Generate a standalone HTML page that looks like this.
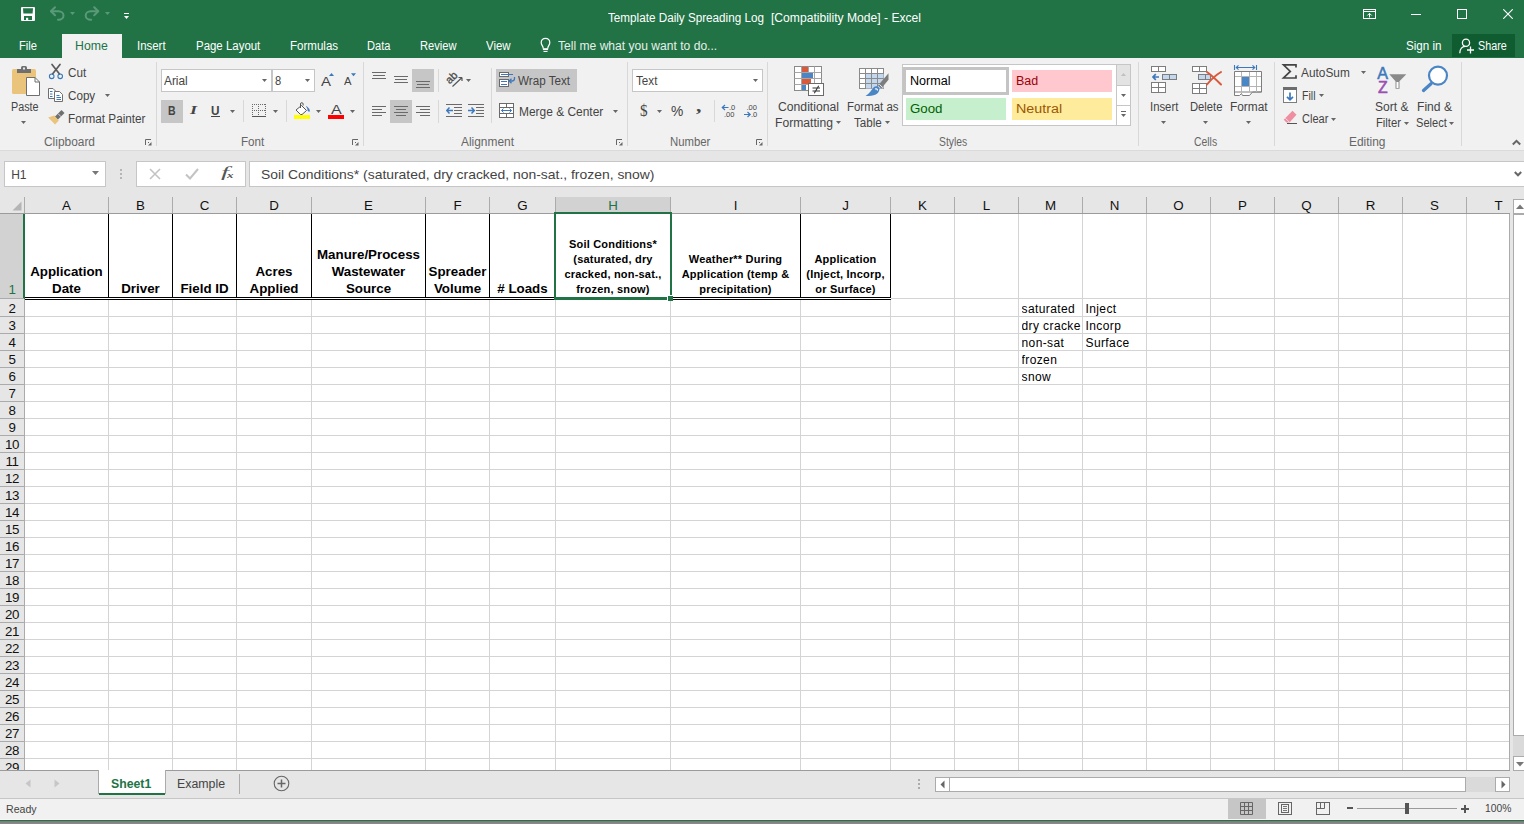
<!DOCTYPE html><html><head><meta charset="utf-8"><title>Excel</title><style>
html,body{margin:0;padding:0;}body{width:1524px;height:824px;overflow:hidden;position:relative;background:#fff;font-family:"Liberation Sans", sans-serif;}
.a{position:absolute;display:block;}
.t{position:absolute;white-space:pre;transform-origin:0 0;display:block;}
</style></head><body>
<div class="a" style="left:0px;top:0px;width:1524px;height:58px;background:#217346;"></div>
<div class="a" style="left:62px;top:34px;width:60px;height:24px;background:#f1f1f1;"></div>
<div class="a" style="left:1452px;top:34px;width:63px;height:23px;background:#0f5c31;"></div>
<svg class="a" style="left:20px;top:6px" width="16" height="16" viewBox="20 6 16 16"><rect x="21" y="7" width="14" height="14" rx="1" fill="#fff"/><path d="M23 8.300h10l-.4 5.200h-9.200z" fill="#217346"/><rect x="24" y="16" width="8" height="4" fill="#217346"/><rect x="26" y="17.800" width="2.200" height="2.200" fill="#fff"/></svg>
<svg class="a" style="left:48px;top:5px" width="18" height="17" viewBox="48 5 18 17"><path d="M51 11.200H58.500a5 4.300 0 0 1 0 8.600H58" fill="none" stroke="#5a9a79" stroke-width="2" stroke-linecap="round"/><path d="M55 7.200L51 11.200L55 15.200" fill="none" stroke="#5a9a79" stroke-width="2" stroke-linecap="round" stroke-linejoin="round"/></svg>
<svg class="a" style="left:70.2px;top:12.0px" width="5" height="3" viewBox="0 0 5 3"><path d="M0 0H5L2.5 3Z" fill="#5a9a79"/></svg>
<svg class="a" style="left:83px;top:5px" width="18" height="17" viewBox="83 5 18 17"><path d="M98.200 11.200H90.700a5 4.300 0 0 0 0 8.600H91.200" fill="none" stroke="#5a9a79" stroke-width="2" stroke-linecap="round"/><path d="M94.200 7.200L98.200 11.200L94.200 15.200" fill="none" stroke="#5a9a79" stroke-width="2" stroke-linecap="round" stroke-linejoin="round"/></svg>
<svg class="a" style="left:105.0px;top:12.0px" width="5" height="3" viewBox="0 0 5 3"><path d="M0 0H5L2.5 3Z" fill="#5a9a79"/></svg>
<div class="a" style="left:124px;top:13px;width:5px;height:1px;background:#ffffff;"></div>
<svg class="a" style="left:123px;top:15px" width="7" height="5" viewBox="123 15 7 5"><path d="M124 16H129L126.500 19z" fill="#fff"/></svg>
<svg class="a" style="left:1363px;top:9px" width="13" height="10" viewBox="0 0 13 10"><rect x="0.5" y="0.5" width="12" height="9" fill="none" stroke="#fff"/><path d="M0.5 2.5h12" stroke="#fff"/><path d="M6.500 8.500V4.500M4.300 6.500L6.500 4.300L8.700 6.500" fill="none" stroke="#fff"/></svg>
<div class="a" style="left:1411px;top:14px;width:10px;height:1px;background:#ffffff;"></div>
<div class="a" style="left:1457px;top:9px;width:10px;height:10px;border:1px solid #fff;box-sizing:border-box;"></div>
<svg class="a" style="left:1503px;top:9px" width="10" height="10" viewBox="0 0 10 10"><path d="M0.300 0.300L9.700 9.700M9.700 0.300L0.300 9.700" stroke="#fff" stroke-width="1.100"/></svg>
<svg class="a" style="left:539px;top:37px" width="13" height="16" viewBox="539 37 13 16"><path d="M543.200 48.400C543.200 46 541.200 45.300 541.200 42.600a4.300 4.300 0 0 1 8.600 0C549.800 45.300 547.800 46 547.800 48.400" fill="none" stroke="#fff" stroke-width="1.250"/><rect x="542.900" y="48.200" width="5.200" height="1.900" fill="#fff"/><path d="M543.500 51.500h4" stroke="#fff" stroke-width="1"/></svg>
<svg class="a" style="left:1459px;top:38px" width="16" height="16" viewBox="0 0 16 16"><circle cx="7" cy="4.7" r="3.6" fill="none" stroke="#fff" stroke-width="1.3"/><path d="M0.8 15.2c0-4.2 2.6-6.6 5.4-6.8" fill="none" stroke="#fff" stroke-width="1.3"/><path d="M11.5 8.5v7M8 12h7" stroke="#fff" stroke-width="1.3"/></svg>
<div class="a" style="left:0px;top:58px;width:1524px;height:92px;background:#f1f1f1;"></div>
<div class="a" style="left:0px;top:150px;width:1524px;height:1px;background:#dadada;"></div>
<div class="a" style="left:0px;top:151px;width:1524px;height:63px;background:#e6e6e6;"></div>
<div class="a" style="left:156px;top:62px;width:1px;height:84px;background:#d8d8d8;"></div>
<div class="a" style="left:363px;top:62px;width:1px;height:84px;background:#d8d8d8;"></div>
<div class="a" style="left:627px;top:62px;width:1px;height:84px;background:#d8d8d8;"></div>
<div class="a" style="left:767px;top:62px;width:1px;height:84px;background:#d8d8d8;"></div>
<div class="a" style="left:1138px;top:62px;width:1px;height:84px;background:#d8d8d8;"></div>
<div class="a" style="left:1274px;top:62px;width:1px;height:84px;background:#d8d8d8;"></div>
<div class="a" style="left:1461px;top:62px;width:1px;height:84px;background:#d8d8d8;"></div>
<svg class="a" style="left:10px;top:64px" width="32" height="34" viewBox="10 64 32 34"><rect x="12" y="69" width="24" height="25" rx="1.600" fill="#ebc47c"/>
<rect x="17" y="69" width="14" height="4" fill="#6f6f6f"/><path d="M21 69.500v-2a1.500 1.500 0 0 1 1.500-1.500h3a1.500 1.500 0 0 1 1.500 1.500v2z" fill="#6f6f6f"/><rect x="23" y="67.500" width="2" height="2" fill="#e8e8e8"/>
<path d="M26.500 77.500h8.500l4.500 4.500v13.500h-13z" fill="#fff" stroke="#6f6f6f"/><path d="M35 77.500v4.500h4.500" fill="none" stroke="#6f6f6f"/></svg>
<svg class="a" style="left:21.0px;top:121.0px" width="5" height="3" viewBox="0 0 5 3"><path d="M0 0H5L2.5 3Z" fill="#666666"/></svg>
<svg class="a" style="left:47px;top:63px" width="18" height="18" viewBox="47 63 18 18"><path d="M52 64.500L59.500 74M60 64.500L52.500 74" stroke="#5a5a5a" stroke-width="1.700" stroke-linecap="round"/>
<circle cx="51.700" cy="76.300" r="2.300" fill="none" stroke="#3b78bd" stroke-width="1.100"/><circle cx="60.200" cy="76.300" r="2.300" fill="none" stroke="#3b78bd" stroke-width="1.100"/></svg>
<svg class="a" style="left:47px;top:87px" width="18" height="16" viewBox="47 87 18 16"><path d="M48.500 88.500h4.500l2.500 2.500v7.500h-7z" fill="#fff" stroke="#6f6f6f"/><path d="M50 91.500h2.500M50 94h2.500M50 96.500h2.500" stroke="#3b78bd"/>
<path d="M54.500 91.500h5l3 3v7h-8z" fill="#fff" stroke="#6f6f6f"/><path d="M56.500 95.500h3M56.500 97.500h4.500M56.500 99.500h4.500" stroke="#3b78bd"/></svg>
<svg class="a" style="left:104.5px;top:94.0px" width="5" height="3" viewBox="0 0 5 3"><path d="M0 0H5L2.5 3Z" fill="#666666"/></svg>
<svg class="a" style="left:47px;top:109px" width="18" height="17" viewBox="47 109 18 17"><path d="M63 111.500L56.300 118.200" stroke="#6f6f6f" stroke-width="4.200"/><path d="M58.200 113.800l3 3" stroke="#f1f1f1" stroke-width=".8"/>
<path d="M48.200 117.600l6-2 4.600 5-3.800 4z" fill="#ebc47c"/></svg>
<svg class="a" style="left:145px;top:139px" width="7" height="7" viewBox="0 0 7 7"><path d="M0.5 6V0.5H6" fill="none" stroke="#666666"/><path d="M6.500 3V6.500H3z" fill="#666666"/><rect x="3" y="3" width="1" height="1" fill="#666666"/></svg>
<div class="a" style="left:161px;top:69px;width:111px;height:23px;background:#fff;border:1px solid #c6c6c6;box-sizing:border-box;"></div>
<div class="a" style="left:272px;top:69px;width:43px;height:23px;background:#fff;border:1px solid #c6c6c6;box-sizing:border-box;"></div>
<svg class="a" style="left:262.0px;top:79.0px" width="5" height="3" viewBox="0 0 5 3"><path d="M0 0H5L2.5 3Z" fill="#666666"/></svg>
<svg class="a" style="left:305.0px;top:79.0px" width="5" height="3" viewBox="0 0 5 3"><path d="M0 0H5L2.5 3Z" fill="#666666"/></svg>
<svg class="a" style="left:328px;top:72px" width="8" height="5" viewBox="328 72 8 5"><path d="M329 76L331.500 73L334 76z" fill="#3b78bd"/></svg>
<svg class="a" style="left:350px;top:72px" width="8" height="5" viewBox="350 72 8 5"><path d="M351 73.300H356L353.500 76.300z" fill="#3b78bd"/></svg>
<div class="a" style="left:161px;top:100px;width:22px;height:23px;background:#c6c6c6;"></div>
<div class="a" style="left:211px;top:116px;width:9px;height:1px;background:#444444;"></div>
<svg class="a" style="left:230.0px;top:110.0px" width="5" height="3" viewBox="0 0 5 3"><path d="M0 0H5L2.5 3Z" fill="#666666"/></svg>
<div class="a" style="left:243px;top:100px;width:1px;height:22px;background:#d8d8d8;"></div>
<svg class="a" style="left:251px;top:103px" width="16" height="15" viewBox="251 103 16 15"><path shape-rendering="crispEdges" d="M252 104.500h14M252 110.500h14M252.500 104v12M258.500 104v12M265.500 104v12" fill="none" stroke="#6a6a6a" stroke-dasharray="1 1"/><path d="M252 116.500h14" stroke="#555"/></svg>
<svg class="a" style="left:273.0px;top:110.0px" width="5" height="3" viewBox="0 0 5 3"><path d="M0 0H5L2.5 3Z" fill="#666666"/></svg>
<div class="a" style="left:286px;top:100px;width:1px;height:22px;background:#d8d8d8;"></div>
<svg class="a" style="left:293px;top:101px" width="18" height="14" viewBox="293 101 18 14"><path d="M301.500 105.500l5 5-4.500 4h-1.500l-4.500-4.500z" fill="#fff" stroke="#555"/><path d="M300.500 108v-4a1.300 1.300 0 0 1 2.600 0v1.500" fill="none" stroke="#555"/>
<path d="M306.500 106.500c1.800 1 3 2.800 3 4.800l-1.500-.3c0-1.500-.5-3-1.500-4.500z" fill="#3b78bd" stroke="#3b78bd" stroke-width=".6"/></svg>
<div class="a" style="left:294px;top:115px;width:16px;height:4px;background:#ffff00;"></div>
<svg class="a" style="left:316.0px;top:110.0px" width="5" height="3" viewBox="0 0 5 3"><path d="M0 0H5L2.5 3Z" fill="#666666"/></svg>
<div class="a" style="left:328px;top:115px;width:16px;height:4px;background:#ff0000;"></div>
<svg class="a" style="left:350.0px;top:110.0px" width="5" height="3" viewBox="0 0 5 3"><path d="M0 0H5L2.5 3Z" fill="#666666"/></svg>
<svg class="a" style="left:352px;top:139px" width="7" height="7" viewBox="0 0 7 7"><path d="M0.5 6V0.5H6" fill="none" stroke="#666666"/><path d="M6.500 3V6.500H3z" fill="#666666"/><rect x="3" y="3" width="1" height="1" fill="#666666"/></svg>
<div class="a" style="left:372px;top:72px;width:14px;height:1px;background:#6a6a6a;"></div>
<div class="a" style="left:373px;top:75px;width:12px;height:1px;background:#6a6a6a;"></div>
<div class="a" style="left:372px;top:78px;width:14px;height:1px;background:#6a6a6a;"></div>
<div class="a" style="left:394px;top:76px;width:14px;height:1px;background:#6a6a6a;"></div>
<div class="a" style="left:395px;top:79px;width:12px;height:1px;background:#6a6a6a;"></div>
<div class="a" style="left:394px;top:82px;width:14px;height:1px;background:#6a6a6a;"></div>
<div class="a" style="left:412px;top:69px;width:22px;height:23px;background:#c6c6c6;"></div>
<div class="a" style="left:416px;top:81px;width:14px;height:1px;background:#6a6a6a;"></div>
<div class="a" style="left:417px;top:84px;width:12px;height:1px;background:#6a6a6a;"></div>
<div class="a" style="left:416px;top:87px;width:14px;height:1px;background:#6a6a6a;"></div>
<div class="a" style="left:438px;top:69px;width:1px;height:23px;background:#d8d8d8;"></div>
<svg class="a" style="left:444px;top:68px" width="20" height="22" viewBox="444 68 20 22"><text x="0" y="0" font-size="11" font-family="Liberation Sans" fill="#4a4a4a" stroke="#4a4a4a" stroke-width=".3" transform="translate(449.700 84.500) rotate(-45)">ab</text><path d="M452.500 86.500L462 77.500M462 77.500h-3.500M462 77.500v3.500" stroke="#555" fill="none" stroke-width="1.200"/></svg>
<svg class="a" style="left:466.0px;top:79.0px" width="5" height="3" viewBox="0 0 5 3"><path d="M0 0H5L2.5 3Z" fill="#666666"/></svg>
<div class="a" style="left:491px;top:68px;width:1px;height:55px;background:#d8d8d8;"></div>
<div class="a" style="left:496px;top:69px;width:81px;height:23px;background:#c6c6c6;"></div>
<svg class="a" style="left:498px;top:71px" width="18" height="17" viewBox="498 71 18 17"><rect x="499.500" y="72.500" width="9" height="4" fill="#fff" stroke="#6a6a6a"/><rect x="499.500" y="79.500" width="9" height="7" fill="#fff" stroke="#6a6a6a"/>
<path d="M501 74.500h12" stroke="#3b78bd"/><path d="M501 81.500h6M501 84.500h6" stroke="#3b78bd"/><path d="M514.500 77v1.500a2.500 2.500 0 0 1-2.500 2.500h-2.500" fill="none" stroke="#3b78bd" stroke-width="1.300"/><path d="M511.500 78.800l-2.300 2.200 2.300 2.200" fill="none" stroke="#3b78bd" stroke-width="1.300"/></svg>
<div class="a" style="left:372px;top:106px;width:14px;height:1px;background:#6a6a6a;"></div>
<div class="a" style="left:372px;top:109px;width:10px;height:1px;background:#6a6a6a;"></div>
<div class="a" style="left:372px;top:112px;width:14px;height:1px;background:#6a6a6a;"></div>
<div class="a" style="left:372px;top:115px;width:10px;height:1px;background:#6a6a6a;"></div>
<div class="a" style="left:390px;top:100px;width:22px;height:23px;background:#c6c6c6;"></div>
<div class="a" style="left:394px;top:106px;width:14px;height:1px;background:#6a6a6a;"></div>
<div class="a" style="left:396px;top:109px;width:10px;height:1px;background:#6a6a6a;"></div>
<div class="a" style="left:394px;top:112px;width:14px;height:1px;background:#6a6a6a;"></div>
<div class="a" style="left:396px;top:115px;width:10px;height:1px;background:#6a6a6a;"></div>
<div class="a" style="left:416px;top:106px;width:14px;height:1px;background:#6a6a6a;"></div>
<div class="a" style="left:420px;top:109px;width:10px;height:1px;background:#6a6a6a;"></div>
<div class="a" style="left:416px;top:112px;width:14px;height:1px;background:#6a6a6a;"></div>
<div class="a" style="left:420px;top:115px;width:10px;height:1px;background:#6a6a6a;"></div>
<div class="a" style="left:438px;top:100px;width:1px;height:23px;background:#d8d8d8;"></div>
<div class="a" style="left:446px;top:104px;width:16px;height:1px;background:#6a6a6a;"></div>
<div class="a" style="left:454px;top:107px;width:8px;height:1px;background:#6a6a6a;"></div>
<div class="a" style="left:454px;top:110px;width:8px;height:1px;background:#6a6a6a;"></div>
<div class="a" style="left:454px;top:113px;width:8px;height:1px;background:#6a6a6a;"></div>
<div class="a" style="left:446px;top:116px;width:16px;height:1px;background:#6a6a6a;"></div>
<svg class="a" style="left:446px;top:106px" width="8" height="9" viewBox="446 106 8 9"><path d="M453 110.500H447M449.5 107.500L446.7 110.500L449.5 113.500" fill="none" stroke="#3b78bd" stroke-width="1.500"/></svg>
<div class="a" style="left:468px;top:104px;width:16px;height:1px;background:#6a6a6a;"></div>
<div class="a" style="left:476px;top:107px;width:8px;height:1px;background:#6a6a6a;"></div>
<div class="a" style="left:476px;top:110px;width:8px;height:1px;background:#6a6a6a;"></div>
<div class="a" style="left:476px;top:113px;width:8px;height:1px;background:#6a6a6a;"></div>
<div class="a" style="left:468px;top:116px;width:16px;height:1px;background:#6a6a6a;"></div>
<svg class="a" style="left:468px;top:106px" width="8" height="9" viewBox="468 106 8 9"><path d="M468 110.500H474M471.5 107.500L474.3 110.500L471.5 113.500" fill="none" stroke="#3b78bd" stroke-width="1.500"/></svg>
<svg class="a" style="left:498px;top:102px" width="18" height="17" viewBox="498 102 18 17"><rect x="499.500" y="103.500" width="14" height="14" fill="#fff" stroke="#6a6a6a"/><path d="M499.500 107.500h14M499.500 113.500h14M506.500 103.500v4M506.500 113.500v4" stroke="#6a6a6a"/>
<path d="M501.500 110.500h10M503.500 108.500l-2 2 2 2M509.500 108.500l2 2-2 2" fill="none" stroke="#3b78bd"/></svg>
<svg class="a" style="left:613.0px;top:110.0px" width="5" height="3" viewBox="0 0 5 3"><path d="M0 0H5L2.5 3Z" fill="#666666"/></svg>
<svg class="a" style="left:616px;top:139px" width="7" height="7" viewBox="0 0 7 7"><path d="M0.5 6V0.5H6" fill="none" stroke="#666666"/><path d="M6.500 3V6.500H3z" fill="#666666"/><rect x="3" y="3" width="1" height="1" fill="#666666"/></svg>
<div class="a" style="left:632px;top:69px;width:131px;height:23px;background:#fff;border:1px solid #c6c6c6;box-sizing:border-box;"></div>
<svg class="a" style="left:753.0px;top:79.0px" width="5" height="3" viewBox="0 0 5 3"><path d="M0 0H5L2.5 3Z" fill="#666666"/></svg>
<svg class="a" style="left:657.0px;top:110.0px" width="5" height="3" viewBox="0 0 5 3"><path d="M0 0H5L2.5 3Z" fill="#666666"/></svg>
<div class="a" style="left:714px;top:100px;width:1px;height:22px;background:#d8d8d8;"></div>
<svg class="a" style="left:720px;top:103px" width="18" height="16" viewBox="720 103 18 16"><path d="M728.500 107.500H722.500M725 105L722.300 107.500L725 110" fill="none" stroke="#3b78bd" stroke-width="1.200"/>
<text x="729" y="109.500" font-size="7.500" font-family="Liberation Sans" fill="#444">.0</text><text x="724" y="116.800" font-size="7.500" font-family="Liberation Sans" fill="#444">.00</text></svg>
<svg class="a" style="left:742px;top:103px" width="18" height="16" viewBox="742 103 18 16"><text x="746.500" y="109.500" font-size="7.500" font-family="Liberation Sans" fill="#444">.00</text>
<path d="M744 114.500H750M747.500 112L750.200 114.500L747.500 117" fill="none" stroke="#3b78bd" stroke-width="1.200"/><text x="751" y="116.800" font-size="7.500" font-family="Liberation Sans" fill="#444">.0</text></svg>
<svg class="a" style="left:756px;top:139px" width="7" height="7" viewBox="0 0 7 7"><path d="M0.5 6V0.5H6" fill="none" stroke="#666666"/><path d="M6.500 3V6.500H3z" fill="#666666"/><rect x="3" y="3" width="1" height="1" fill="#666666"/></svg>
<svg class="a" style="left:793px;top:65px" width="32" height="32" viewBox="793 65 32 32"><rect x="794.500" y="66.500" width="27" height="24" fill="#fff" stroke="#8a8a8a"/>
<path d="M794.500 72.500h27M794.500 78.500h27M794.500 84.500h27M801.500 66.500v24M808.500 66.500v24M814.500 66.500v24" stroke="#a6a6a6"/>
<rect x="802" y="67" width="6" height="5" fill="#d9593a"/><rect x="802" y="73" width="11" height="5" fill="#4a86c5"/><rect x="802" y="79" width="9" height="5" fill="#d9593a"/><rect x="802" y="85" width="4" height="5" fill="#4a86c5"/>
<rect x="808.500" y="83.500" width="15" height="12" fill="#fff" stroke="#6a6a6a"/><path d="M812.500 88h7.500M812.500 91h7.500M818.700 85.800l-4.400 7.400" stroke="#333" stroke-width="1.100"/></svg>
<svg class="a" style="left:836.0px;top:121.0px" width="5" height="3" viewBox="0 0 5 3"><path d="M0 0H5L2.5 3Z" fill="#666666"/></svg>
<svg class="a" style="left:858px;top:66px" width="32" height="31" viewBox="858 66 32 31"><rect x="859.500" y="68.500" width="24" height="20" fill="#fff" stroke="#8a8a8a"/><rect x="866" y="74" width="17.500" height="14.500" fill="#c3d8ef"/>
<path d="M859.500 73.500h24M859.500 78.500h24M859.500 83.500h24M865.500 68.500v20M871.500 68.500v20M877.500 68.500v20" stroke="#8a8a8a"/>
<path d="M888.500 73.300v6.500l-7.300 8.700-3.200-3z" fill="#7d7d7d"/><path d="M879.300 84.300l2.800 2.700" stroke="#f1f1f1" stroke-width="1"/>
<path d="M877.500 86.500c2 .5 2.500 2.500 1.500 4.500-1.500 3.500-4 5-13.500 5 4-2.500 6-6 8-8.500 1-1 2.500-1.500 4-1z" fill="#4a86c5"/><path d="M875 89c1.500-.5 2.500 0 2.500 1.500" stroke="#fff" fill="none" stroke-width="1.200"/></svg>
<svg class="a" style="left:885.0px;top:121.0px" width="5" height="3" viewBox="0 0 5 3"><path d="M0 0H5L2.5 3Z" fill="#666666"/></svg>
<div class="a" style="left:902px;top:64px;width:229px;height:62px;background:#fff;border:1px solid #c6c6c6;box-sizing:border-box;"></div>
<div class="a" style="left:903px;top:67px;width:106px;height:28px;background:#fff;border:3px solid #c4c4c4;box-sizing:border-box;"></div>
<div class="a" style="left:1012px;top:70px;width:100px;height:22px;background:#ffc7ce;"></div>
<div class="a" style="left:906px;top:98px;width:100px;height:22px;background:#c6efce;"></div>
<div class="a" style="left:1012px;top:98px;width:100px;height:22px;background:#ffeb9c;"></div>
<div class="a" style="left:1116px;top:64px;width:15px;height:62px;background:#fff;border:1px solid #c6c6c6;box-sizing:border-box;"></div>
<div class="a" style="left:1117px;top:65px;width:13px;height:20px;background:#e3e3e3;"></div>
<div class="a" style="left:1117px;top:85px;width:13px;height:1px;background:#c6c6c6;"></div>
<div class="a" style="left:1117px;top:105px;width:13px;height:1px;background:#c6c6c6;"></div>
<svg class="a" style="left:1121px;top:73px" width="5" height="3" viewBox="0 0 5 3"><path d="M0 3L2.500 0L5 3z" fill="#c0c0c0"/></svg>
<svg class="a" style="left:1121.0px;top:94.0px" width="5" height="3" viewBox="0 0 5 3"><path d="M0 0H5L2.5 3Z" fill="#666666"/></svg>
<div class="a" style="left:1121px;top:111px;width:5px;height:1px;background:#666666;"></div>
<svg class="a" style="left:1121.0px;top:114.0px" width="5" height="3" viewBox="0 0 5 3"><path d="M0 0H5L2.5 3Z" fill="#666666"/></svg>
<svg class="a" style="left:1150px;top:65px" width="29" height="30" viewBox="1150 65 29 30"><rect x="1151.500" y="66.500" width="14" height="5" fill="#fff" stroke="#7d7d7d"/><path d="M1158.500 66.500v5" stroke="#7d7d7d"/>
<rect x="1151.500" y="82.500" width="14" height="10" fill="#fff" stroke="#7d7d7d"/><path d="M1158.500 82.500v10M1151.500 87.500h14" stroke="#7d7d7d"/>
<rect x="1162.500" y="74.500" width="14" height="5" fill="#c3d8ef" stroke="#7d7d7d"/><path d="M1169.500 74.500v5" stroke="#7d7d7d"/>
<path d="M1159 77H1153M1155.800 74.200L1153 77l2.800 2.800" fill="none" stroke="#3b78bd" stroke-width="1.700"/></svg>
<svg class="a" style="left:1161.0px;top:121.0px" width="5" height="3" viewBox="0 0 5 3"><path d="M0 0H5L2.5 3Z" fill="#666666"/></svg>
<svg class="a" style="left:1191px;top:65px" width="32" height="30" viewBox="1191 65 32 30"><rect x="1192.500" y="66.500" width="14" height="5" fill="#fff" stroke="#7d7d7d"/><path d="M1199.500 66.500v5" stroke="#7d7d7d"/>
<rect x="1192.500" y="83.500" width="14" height="10" fill="#fff" stroke="#7d7d7d"/><path d="M1199.500 83.500v10M1192.500 88.500h14" stroke="#7d7d7d"/>
<rect x="1198.500" y="74.500" width="12" height="5" fill="#c3d8ef" stroke="#7d7d7d"/><path d="M1205.500 74.500v5" stroke="#7d7d7d"/>
<path d="M1207 72c4 3 9 7.500 14 12.500M1221 72c-5 3-10 7.500-14 12.500" fill="none" stroke="#d9593a" stroke-width="2" stroke-linecap="round"/></svg>
<svg class="a" style="left:1203.0px;top:121.0px" width="5" height="3" viewBox="0 0 5 3"><path d="M0 0H5L2.5 3Z" fill="#666666"/></svg>
<svg class="a" style="left:1233px;top:64px" width="30" height="33" viewBox="1233 64 30 33"><path d="M1234.500 65v5M1256.500 65v5M1236 67.500h19M1238.500 65.300l-2.300 2.200 2.300 2.200M1252.500 65.300l2.300 2.200-2.300 2.200" fill="none" stroke="#3b78bd" stroke-width="1.100"/>
<path d="M1234.500 71.500h27v20.500h-9l-3 3.500h-7l-1-2-2 2h-5z" fill="#fff" stroke="#7d7d7d"/><path d="M1234.500 92h27" stroke="#7d7d7d"/>
<path d="M1235 76.500h26M1235 86.500h26M1241.500 72v20M1249.500 72v20M1256.500 72v20" stroke="#b4b4b4"/><rect x="1242" y="77" width="7" height="9" fill="#4a86c5"/></svg>
<svg class="a" style="left:1246.0px;top:121.0px" width="5" height="3" viewBox="0 0 5 3"><path d="M0 0H5L2.5 3Z" fill="#666666"/></svg>
<svg class="a" style="left:1281px;top:63px" width="17" height="17" viewBox="1281 63 17 17"><path d="M1296 67.500V64.800H1283.500L1290.300 71.400L1283.500 78H1296V75.300" fill="none" stroke="#444" stroke-width="1.700"/></svg>
<svg class="a" style="left:1361.0px;top:71.0px" width="5" height="3" viewBox="0 0 5 3"><path d="M0 0H5L2.5 3Z" fill="#666666"/></svg>
<svg class="a" style="left:1282px;top:86px" width="16" height="18" viewBox="1282 86 16 18"><rect x="1283.500" y="87.500" width="13" height="15" fill="#fff" stroke="#7d7d7d"/><rect x="1283" y="87" width="14" height="3" fill="#6d6d6d"/>
<path d="M1290 92.500v7M1287 96.800l3 3 3-3" fill="none" stroke="#3b78bd" stroke-width="1.700"/></svg>
<svg class="a" style="left:1319.0px;top:94.0px" width="5" height="3" viewBox="0 0 5 3"><path d="M0 0H5L2.5 3Z" fill="#666666"/></svg>
<svg class="a" style="left:1282px;top:109px" width="17" height="16" viewBox="1282 109 17 16"><path d="M1292.500 110.800l4 4-7 7.700h-3l-2.800-2.800z" fill="#ee8ea0"/><path d="M1285.500 118.300l4.200 4.200" stroke="#fbdfe4" stroke-width="1"/><path d="M1287 123.500h10" stroke="#555"/></svg>
<svg class="a" style="left:1331.0px;top:117.5px" width="5" height="3" viewBox="0 0 5 3"><path d="M0 0H5L2.5 3Z" fill="#666666"/></svg>
<svg class="a" style="left:1376px;top:64px" width="32" height="32" viewBox="1376 64 32 32"><text x="1377.200" y="78.700" font-size="16.300" textLength="10.800" lengthAdjust="spacingAndGlyphs" font-family="Liberation Sans" fill="#3b78bd" stroke="#3b78bd" stroke-width=".5">A</text><text x="1378" y="92.700" font-size="16.300" textLength="9.700" lengthAdjust="spacingAndGlyphs" font-family="Liberation Sans" fill="#9b4fb3" stroke="#9b4fb3" stroke-width=".5">Z</text>
<path d="M1389.300 74.300h17l-6.800 7v7.500h-4v-7.500z" fill="#8a8a8a"/><rect x="1396.500" y="82" width="2" height="6" fill="#fff"/></svg>
<svg class="a" style="left:1404.0px;top:121.5px" width="5" height="3" viewBox="0 0 5 3"><path d="M0 0H5L2.5 3Z" fill="#666666"/></svg>
<svg class="a" style="left:1419px;top:63px" width="32" height="32" viewBox="1419 63 32 32"><circle cx="1438" cy="75.600" r="9" fill="#fff" stroke="#4a86c5" stroke-width="2.200"/><path d="M1431 83.800L1423.500 90.500" stroke="#4a86c5" stroke-width="3.300" stroke-linecap="round"/></svg>
<svg class="a" style="left:1449.0px;top:121.5px" width="5" height="3" viewBox="0 0 5 3"><path d="M0 0H5L2.5 3Z" fill="#666666"/></svg>
<svg class="a" style="left:1512px;top:138.5px" width="9" height="7" viewBox="0 0 9 7"><path d="M0.800 5.500L4.500 1.800L8.200 5.500" fill="none" stroke="#666" stroke-width="2"/></svg>
<div class="a" style="left:4px;top:161px;width:102px;height:26px;background:#fff;border:1px solid #c6c6c6;box-sizing:border-box;"></div>
<svg class="a" style="left:92.0px;top:171.0px" width="7" height="4" viewBox="0 0 7 4"><path d="M0 0H7L3.5 4Z" fill="#777"/></svg>
<div class="a" style="left:120px;top:169px;width:2px;height:2px;background:#b5b5b5;"></div>
<div class="a" style="left:120px;top:173px;width:2px;height:2px;background:#b5b5b5;"></div>
<div class="a" style="left:120px;top:177px;width:2px;height:2px;background:#b5b5b5;"></div>
<div class="a" style="left:136px;top:161px;width:110px;height:26px;background:#fff;border:1px solid #c6c6c6;box-sizing:border-box;"></div>
<svg class="a" style="left:149px;top:168px" width="12" height="12" viewBox="0 0 12 12"><path d="M1 1L11 11M11 1L1 11" stroke="#c3c3c3" stroke-width="1.600"/></svg>
<svg class="a" style="left:185px;top:168px" width="14" height="12" viewBox="0 0 14 12"><path d="M1 6.500L5 10.500L13 1" fill="none" stroke="#c3c3c3" stroke-width="2"/></svg>
<div class="a" style="left:249px;top:161px;width:1280px;height:26px;background:#fff;border:1px solid #c6c6c6;box-sizing:border-box;"></div>
<svg class="a" style="left:1513.5px;top:170.5px" width="8" height="6" viewBox="0 0 8 6"><path d="M0.800 1L4 4.300L7.200 1" fill="none" stroke="#666" stroke-width="2"/></svg>
<div class="a" style="left:25px;top:214px;width:1484px;height:556px;background:#fff;"></div>
<div class="a" style="left:25px;top:298px;width:1484px;height:1px;background:#d4d4d4;"></div>
<div class="a" style="left:25px;top:316px;width:1484px;height:1px;background:#d4d4d4;"></div>
<div class="a" style="left:25px;top:333px;width:1484px;height:1px;background:#d4d4d4;"></div>
<div class="a" style="left:25px;top:350px;width:1484px;height:1px;background:#d4d4d4;"></div>
<div class="a" style="left:25px;top:367px;width:1484px;height:1px;background:#d4d4d4;"></div>
<div class="a" style="left:25px;top:384px;width:1484px;height:1px;background:#d4d4d4;"></div>
<div class="a" style="left:25px;top:401px;width:1484px;height:1px;background:#d4d4d4;"></div>
<div class="a" style="left:25px;top:418px;width:1484px;height:1px;background:#d4d4d4;"></div>
<div class="a" style="left:25px;top:435px;width:1484px;height:1px;background:#d4d4d4;"></div>
<div class="a" style="left:25px;top:452px;width:1484px;height:1px;background:#d4d4d4;"></div>
<div class="a" style="left:25px;top:469px;width:1484px;height:1px;background:#d4d4d4;"></div>
<div class="a" style="left:25px;top:486px;width:1484px;height:1px;background:#d4d4d4;"></div>
<div class="a" style="left:25px;top:503px;width:1484px;height:1px;background:#d4d4d4;"></div>
<div class="a" style="left:25px;top:520px;width:1484px;height:1px;background:#d4d4d4;"></div>
<div class="a" style="left:25px;top:537px;width:1484px;height:1px;background:#d4d4d4;"></div>
<div class="a" style="left:25px;top:554px;width:1484px;height:1px;background:#d4d4d4;"></div>
<div class="a" style="left:25px;top:571px;width:1484px;height:1px;background:#d4d4d4;"></div>
<div class="a" style="left:25px;top:588px;width:1484px;height:1px;background:#d4d4d4;"></div>
<div class="a" style="left:25px;top:605px;width:1484px;height:1px;background:#d4d4d4;"></div>
<div class="a" style="left:25px;top:622px;width:1484px;height:1px;background:#d4d4d4;"></div>
<div class="a" style="left:25px;top:639px;width:1484px;height:1px;background:#d4d4d4;"></div>
<div class="a" style="left:25px;top:656px;width:1484px;height:1px;background:#d4d4d4;"></div>
<div class="a" style="left:25px;top:673px;width:1484px;height:1px;background:#d4d4d4;"></div>
<div class="a" style="left:25px;top:690px;width:1484px;height:1px;background:#d4d4d4;"></div>
<div class="a" style="left:25px;top:707px;width:1484px;height:1px;background:#d4d4d4;"></div>
<div class="a" style="left:25px;top:724px;width:1484px;height:1px;background:#d4d4d4;"></div>
<div class="a" style="left:25px;top:741px;width:1484px;height:1px;background:#d4d4d4;"></div>
<div class="a" style="left:25px;top:758px;width:1484px;height:1px;background:#d4d4d4;"></div>
<div class="a" style="left:108px;top:214px;width:1px;height:556px;background:#d4d4d4;"></div>
<div class="a" style="left:172px;top:214px;width:1px;height:556px;background:#d4d4d4;"></div>
<div class="a" style="left:236px;top:214px;width:1px;height:556px;background:#d4d4d4;"></div>
<div class="a" style="left:311px;top:214px;width:1px;height:556px;background:#d4d4d4;"></div>
<div class="a" style="left:425px;top:214px;width:1px;height:556px;background:#d4d4d4;"></div>
<div class="a" style="left:489px;top:214px;width:1px;height:556px;background:#d4d4d4;"></div>
<div class="a" style="left:555px;top:214px;width:1px;height:556px;background:#d4d4d4;"></div>
<div class="a" style="left:670px;top:214px;width:1px;height:556px;background:#d4d4d4;"></div>
<div class="a" style="left:800px;top:214px;width:1px;height:556px;background:#d4d4d4;"></div>
<div class="a" style="left:890px;top:214px;width:1px;height:556px;background:#d4d4d4;"></div>
<div class="a" style="left:954px;top:214px;width:1px;height:556px;background:#d4d4d4;"></div>
<div class="a" style="left:1018px;top:214px;width:1px;height:556px;background:#d4d4d4;"></div>
<div class="a" style="left:1082px;top:214px;width:1px;height:556px;background:#d4d4d4;"></div>
<div class="a" style="left:1146px;top:214px;width:1px;height:556px;background:#d4d4d4;"></div>
<div class="a" style="left:1210px;top:214px;width:1px;height:556px;background:#d4d4d4;"></div>
<div class="a" style="left:1274px;top:214px;width:1px;height:556px;background:#d4d4d4;"></div>
<div class="a" style="left:1338px;top:214px;width:1px;height:556px;background:#d4d4d4;"></div>
<div class="a" style="left:1402px;top:214px;width:1px;height:556px;background:#d4d4d4;"></div>
<div class="a" style="left:1466px;top:214px;width:1px;height:556px;background:#d4d4d4;"></div>
<div class="a" style="left:1509px;top:213px;width:1px;height:557px;background:#ababab;"></div>
<div class="a" style="left:0px;top:213px;width:1510px;height:1px;background:#9b9b9b;"></div>
<div class="a" style="left:556px;top:197px;width:114px;height:16px;background:#d2d2d2;"></div>
<div class="a" style="left:556px;top:212px;width:115px;height:2px;background:#217346;"></div>
<div class="a" style="left:24px;top:197px;width:1px;height:16px;background:#ababab;"></div>
<div class="a" style="left:108px;top:197px;width:1px;height:16px;background:#ababab;"></div>
<div class="a" style="left:172px;top:197px;width:1px;height:16px;background:#ababab;"></div>
<div class="a" style="left:236px;top:197px;width:1px;height:16px;background:#ababab;"></div>
<div class="a" style="left:311px;top:197px;width:1px;height:16px;background:#ababab;"></div>
<div class="a" style="left:425px;top:197px;width:1px;height:16px;background:#ababab;"></div>
<div class="a" style="left:489px;top:197px;width:1px;height:16px;background:#ababab;"></div>
<div class="a" style="left:555px;top:197px;width:1px;height:16px;background:#ababab;"></div>
<div class="a" style="left:670px;top:197px;width:1px;height:16px;background:#ababab;"></div>
<div class="a" style="left:800px;top:197px;width:1px;height:16px;background:#ababab;"></div>
<div class="a" style="left:890px;top:197px;width:1px;height:16px;background:#ababab;"></div>
<div class="a" style="left:954px;top:197px;width:1px;height:16px;background:#ababab;"></div>
<div class="a" style="left:1018px;top:197px;width:1px;height:16px;background:#ababab;"></div>
<div class="a" style="left:1082px;top:197px;width:1px;height:16px;background:#ababab;"></div>
<div class="a" style="left:1146px;top:197px;width:1px;height:16px;background:#ababab;"></div>
<div class="a" style="left:1210px;top:197px;width:1px;height:16px;background:#ababab;"></div>
<div class="a" style="left:1274px;top:197px;width:1px;height:16px;background:#ababab;"></div>
<div class="a" style="left:1338px;top:197px;width:1px;height:16px;background:#ababab;"></div>
<div class="a" style="left:1402px;top:197px;width:1px;height:16px;background:#ababab;"></div>
<div class="a" style="left:1466px;top:197px;width:1px;height:16px;background:#ababab;"></div>
<div class="a" style="left:46.5px;top:196.500px;width:40px;height:16px;line-height:17px;text-align:center;font-size:13.330px;color:#111;">A</div>
<div class="a" style="left:120.5px;top:196.500px;width:40px;height:16px;line-height:17px;text-align:center;font-size:13.330px;color:#111;">B</div>
<div class="a" style="left:184.5px;top:196.500px;width:40px;height:16px;line-height:17px;text-align:center;font-size:13.330px;color:#111;">C</div>
<div class="a" style="left:254.0px;top:196.500px;width:40px;height:16px;line-height:17px;text-align:center;font-size:13.330px;color:#111;">D</div>
<div class="a" style="left:348.5px;top:196.500px;width:40px;height:16px;line-height:17px;text-align:center;font-size:13.330px;color:#111;">E</div>
<div class="a" style="left:437.5px;top:196.500px;width:40px;height:16px;line-height:17px;text-align:center;font-size:13.330px;color:#111;">F</div>
<div class="a" style="left:502.5px;top:196.500px;width:40px;height:16px;line-height:17px;text-align:center;font-size:13.330px;color:#111;">G</div>
<div class="a" style="left:593.0px;top:196.500px;width:40px;height:16px;line-height:17px;text-align:center;font-size:13.330px;color:#217346;">H</div>
<div class="a" style="left:715.5px;top:196.500px;width:40px;height:16px;line-height:17px;text-align:center;font-size:13.330px;color:#111;">I</div>
<div class="a" style="left:825.5px;top:196.500px;width:40px;height:16px;line-height:17px;text-align:center;font-size:13.330px;color:#111;">J</div>
<div class="a" style="left:902.5px;top:196.500px;width:40px;height:16px;line-height:17px;text-align:center;font-size:13.330px;color:#111;">K</div>
<div class="a" style="left:966.5px;top:196.500px;width:40px;height:16px;line-height:17px;text-align:center;font-size:13.330px;color:#111;">L</div>
<div class="a" style="left:1030.5px;top:196.500px;width:40px;height:16px;line-height:17px;text-align:center;font-size:13.330px;color:#111;">M</div>
<div class="a" style="left:1094.5px;top:196.500px;width:40px;height:16px;line-height:17px;text-align:center;font-size:13.330px;color:#111;">N</div>
<div class="a" style="left:1158.5px;top:196.500px;width:40px;height:16px;line-height:17px;text-align:center;font-size:13.330px;color:#111;">O</div>
<div class="a" style="left:1222.5px;top:196.500px;width:40px;height:16px;line-height:17px;text-align:center;font-size:13.330px;color:#111;">P</div>
<div class="a" style="left:1286.5px;top:196.500px;width:40px;height:16px;line-height:17px;text-align:center;font-size:13.330px;color:#111;">Q</div>
<div class="a" style="left:1350.5px;top:196.500px;width:40px;height:16px;line-height:17px;text-align:center;font-size:13.330px;color:#111;">R</div>
<div class="a" style="left:1414.5px;top:196.500px;width:40px;height:16px;line-height:17px;text-align:center;font-size:13.330px;color:#111;">S</div>
<div class="a" style="left:1478.5px;top:196.500px;width:40px;height:16px;line-height:17px;text-align:center;font-size:13.330px;color:#111;">T</div>
<div class="a" style="left:1510px;top:190px;width:14px;height:24px;background:#e6e6e6;"></div>
<svg class="a" style="left:11.5px;top:200.5px" width="10" height="10" viewBox="0 0 10 10"><path d="M9.500 0.500V9.500H0.500z" fill="#b4b4b4"/></svg>
<div class="a" style="left:0px;top:214px;width:24px;height:556px;background:#e6e6e6;"></div>
<div class="a" style="left:24px;top:214px;width:1px;height:556px;background:#ababab;"></div>
<div class="a" style="left:0px;top:214px;width:23px;height:84px;background:#d2d2d2;"></div>
<div class="a" style="left:23px;top:214px;width:2px;height:85px;background:#217346;"></div>
<div class="a" style="left:0px;top:298px;width:24px;height:1px;background:#ababab;"></div>
<div class="a" style="left:0px;top:316px;width:24px;height:1px;background:#ababab;"></div>
<div class="a" style="left:0px;top:333px;width:24px;height:1px;background:#ababab;"></div>
<div class="a" style="left:0px;top:350px;width:24px;height:1px;background:#ababab;"></div>
<div class="a" style="left:0px;top:367px;width:24px;height:1px;background:#ababab;"></div>
<div class="a" style="left:0px;top:384px;width:24px;height:1px;background:#ababab;"></div>
<div class="a" style="left:0px;top:401px;width:24px;height:1px;background:#ababab;"></div>
<div class="a" style="left:0px;top:418px;width:24px;height:1px;background:#ababab;"></div>
<div class="a" style="left:0px;top:435px;width:24px;height:1px;background:#ababab;"></div>
<div class="a" style="left:0px;top:452px;width:24px;height:1px;background:#ababab;"></div>
<div class="a" style="left:0px;top:469px;width:24px;height:1px;background:#ababab;"></div>
<div class="a" style="left:0px;top:486px;width:24px;height:1px;background:#ababab;"></div>
<div class="a" style="left:0px;top:503px;width:24px;height:1px;background:#ababab;"></div>
<div class="a" style="left:0px;top:520px;width:24px;height:1px;background:#ababab;"></div>
<div class="a" style="left:0px;top:537px;width:24px;height:1px;background:#ababab;"></div>
<div class="a" style="left:0px;top:554px;width:24px;height:1px;background:#ababab;"></div>
<div class="a" style="left:0px;top:571px;width:24px;height:1px;background:#ababab;"></div>
<div class="a" style="left:0px;top:588px;width:24px;height:1px;background:#ababab;"></div>
<div class="a" style="left:0px;top:605px;width:24px;height:1px;background:#ababab;"></div>
<div class="a" style="left:0px;top:622px;width:24px;height:1px;background:#ababab;"></div>
<div class="a" style="left:0px;top:639px;width:24px;height:1px;background:#ababab;"></div>
<div class="a" style="left:0px;top:656px;width:24px;height:1px;background:#ababab;"></div>
<div class="a" style="left:0px;top:673px;width:24px;height:1px;background:#ababab;"></div>
<div class="a" style="left:0px;top:690px;width:24px;height:1px;background:#ababab;"></div>
<div class="a" style="left:0px;top:707px;width:24px;height:1px;background:#ababab;"></div>
<div class="a" style="left:0px;top:724px;width:24px;height:1px;background:#ababab;"></div>
<div class="a" style="left:0px;top:741px;width:24px;height:1px;background:#ababab;"></div>
<div class="a" style="left:0px;top:758px;width:24px;height:1px;background:#ababab;"></div>
<div class="a" style="left:0;top:280.5px;width:24px;height:17px;line-height:17px;text-align:center;font-size:13.330px;letter-spacing:-0.400px;color:#217346;overflow:hidden;">1</div>
<div class="a" style="left:0;top:299.5px;width:24px;height:17px;line-height:17px;text-align:center;font-size:13.330px;letter-spacing:-0.400px;color:#111;overflow:hidden;">2</div>
<div class="a" style="left:0;top:316.5px;width:24px;height:17px;line-height:17px;text-align:center;font-size:13.330px;letter-spacing:-0.400px;color:#111;overflow:hidden;">3</div>
<div class="a" style="left:0;top:333.5px;width:24px;height:17px;line-height:17px;text-align:center;font-size:13.330px;letter-spacing:-0.400px;color:#111;overflow:hidden;">4</div>
<div class="a" style="left:0;top:350.5px;width:24px;height:17px;line-height:17px;text-align:center;font-size:13.330px;letter-spacing:-0.400px;color:#111;overflow:hidden;">5</div>
<div class="a" style="left:0;top:367.5px;width:24px;height:17px;line-height:17px;text-align:center;font-size:13.330px;letter-spacing:-0.400px;color:#111;overflow:hidden;">6</div>
<div class="a" style="left:0;top:384.5px;width:24px;height:17px;line-height:17px;text-align:center;font-size:13.330px;letter-spacing:-0.400px;color:#111;overflow:hidden;">7</div>
<div class="a" style="left:0;top:401.5px;width:24px;height:17px;line-height:17px;text-align:center;font-size:13.330px;letter-spacing:-0.400px;color:#111;overflow:hidden;">8</div>
<div class="a" style="left:0;top:418.5px;width:24px;height:17px;line-height:17px;text-align:center;font-size:13.330px;letter-spacing:-0.400px;color:#111;overflow:hidden;">9</div>
<div class="a" style="left:0;top:435.5px;width:24px;height:17px;line-height:17px;text-align:center;font-size:13.330px;letter-spacing:-0.400px;color:#111;overflow:hidden;">10</div>
<div class="a" style="left:0;top:452.5px;width:24px;height:17px;line-height:17px;text-align:center;font-size:13.330px;letter-spacing:-0.400px;color:#111;overflow:hidden;">11</div>
<div class="a" style="left:0;top:469.5px;width:24px;height:17px;line-height:17px;text-align:center;font-size:13.330px;letter-spacing:-0.400px;color:#111;overflow:hidden;">12</div>
<div class="a" style="left:0;top:486.5px;width:24px;height:17px;line-height:17px;text-align:center;font-size:13.330px;letter-spacing:-0.400px;color:#111;overflow:hidden;">13</div>
<div class="a" style="left:0;top:503.5px;width:24px;height:17px;line-height:17px;text-align:center;font-size:13.330px;letter-spacing:-0.400px;color:#111;overflow:hidden;">14</div>
<div class="a" style="left:0;top:520.5px;width:24px;height:17px;line-height:17px;text-align:center;font-size:13.330px;letter-spacing:-0.400px;color:#111;overflow:hidden;">15</div>
<div class="a" style="left:0;top:537.5px;width:24px;height:17px;line-height:17px;text-align:center;font-size:13.330px;letter-spacing:-0.400px;color:#111;overflow:hidden;">16</div>
<div class="a" style="left:0;top:554.5px;width:24px;height:17px;line-height:17px;text-align:center;font-size:13.330px;letter-spacing:-0.400px;color:#111;overflow:hidden;">17</div>
<div class="a" style="left:0;top:571.5px;width:24px;height:17px;line-height:17px;text-align:center;font-size:13.330px;letter-spacing:-0.400px;color:#111;overflow:hidden;">18</div>
<div class="a" style="left:0;top:588.5px;width:24px;height:17px;line-height:17px;text-align:center;font-size:13.330px;letter-spacing:-0.400px;color:#111;overflow:hidden;">19</div>
<div class="a" style="left:0;top:605.5px;width:24px;height:17px;line-height:17px;text-align:center;font-size:13.330px;letter-spacing:-0.400px;color:#111;overflow:hidden;">20</div>
<div class="a" style="left:0;top:622.5px;width:24px;height:17px;line-height:17px;text-align:center;font-size:13.330px;letter-spacing:-0.400px;color:#111;overflow:hidden;">21</div>
<div class="a" style="left:0;top:639.5px;width:24px;height:17px;line-height:17px;text-align:center;font-size:13.330px;letter-spacing:-0.400px;color:#111;overflow:hidden;">22</div>
<div class="a" style="left:0;top:656.5px;width:24px;height:17px;line-height:17px;text-align:center;font-size:13.330px;letter-spacing:-0.400px;color:#111;overflow:hidden;">23</div>
<div class="a" style="left:0;top:673.5px;width:24px;height:17px;line-height:17px;text-align:center;font-size:13.330px;letter-spacing:-0.400px;color:#111;overflow:hidden;">24</div>
<div class="a" style="left:0;top:690.5px;width:24px;height:17px;line-height:17px;text-align:center;font-size:13.330px;letter-spacing:-0.400px;color:#111;overflow:hidden;">25</div>
<div class="a" style="left:0;top:707.5px;width:24px;height:17px;line-height:17px;text-align:center;font-size:13.330px;letter-spacing:-0.400px;color:#111;overflow:hidden;">26</div>
<div class="a" style="left:0;top:724.5px;width:24px;height:17px;line-height:17px;text-align:center;font-size:13.330px;letter-spacing:-0.400px;color:#111;overflow:hidden;">27</div>
<div class="a" style="left:0;top:741.5px;width:24px;height:17px;line-height:17px;text-align:center;font-size:13.330px;letter-spacing:-0.400px;color:#111;overflow:hidden;">28</div>
<div class="a" style="left:0;top:758.5px;width:24px;height:17px;line-height:17px;text-align:center;font-size:13.330px;letter-spacing:-0.400px;color:#111;overflow:hidden;">29</div>
<div class="a" style="left:108px;top:214px;width:1px;height:86px;background:#000;"></div>
<div class="a" style="left:172px;top:214px;width:1px;height:86px;background:#000;"></div>
<div class="a" style="left:236px;top:214px;width:1px;height:86px;background:#000;"></div>
<div class="a" style="left:311px;top:214px;width:1px;height:86px;background:#000;"></div>
<div class="a" style="left:425px;top:214px;width:1px;height:86px;background:#000;"></div>
<div class="a" style="left:489px;top:214px;width:1px;height:86px;background:#000;"></div>
<div class="a" style="left:555px;top:214px;width:1px;height:86px;background:#000;"></div>
<div class="a" style="left:670px;top:214px;width:1px;height:86px;background:#000;"></div>
<div class="a" style="left:800px;top:214px;width:1px;height:86px;background:#000;"></div>
<div class="a" style="left:890px;top:214px;width:1px;height:86px;background:#000;"></div>
<div class="a" style="left:25px;top:297px;width:866px;height:1px;background:#000;"></div>
<div class="a" style="left:25px;top:298px;width:866px;height:1px;background:#fff;"></div>
<div class="a" style="left:25px;top:299px;width:866px;height:1px;background:#000;"></div>
<div class="a" style="left:25px;top:262.6px;width:83px;height:34px;line-height:17px;text-align:center;font-size:13.33px;font-weight:bold;color:#000;white-space:nowrap;">Application<br>Date</div>
<div class="a" style="left:109px;top:279.6px;width:63px;height:17px;line-height:17px;text-align:center;font-size:13.33px;font-weight:bold;color:#000;white-space:nowrap;">Driver</div>
<div class="a" style="left:173px;top:279.6px;width:63px;height:17px;line-height:17px;text-align:center;font-size:13.33px;font-weight:bold;color:#000;white-space:nowrap;">Field ID</div>
<div class="a" style="left:237px;top:262.6px;width:74px;height:34px;line-height:17px;text-align:center;font-size:13.33px;font-weight:bold;color:#000;white-space:nowrap;">Acres<br>Applied</div>
<div class="a" style="left:312px;top:245.60000000000002px;width:113px;height:51px;line-height:17px;text-align:center;font-size:13.33px;font-weight:bold;color:#000;white-space:nowrap;">Manure/Process<br>Wastewater<br>Source</div>
<div class="a" style="left:426px;top:262.6px;width:63px;height:34px;line-height:17px;text-align:center;font-size:13.33px;font-weight:bold;color:#000;white-space:nowrap;">Spreader<br>Volume</div>
<div class="a" style="left:490px;top:279.6px;width:65px;height:17px;line-height:17px;text-align:center;font-size:13.33px;font-weight:bold;color:#000;white-space:nowrap;"># Loads</div>
<div class="a" style="left:556px;top:236.5px;width:114px;height:60px;line-height:15px;text-align:center;font-size:11px;font-weight:bold;color:#000;white-space:nowrap;letter-spacing:0.200px;">Soil Conditions*<br>(saturated, dry<br>cracked, non-sat.,<br>frozen, snow)</div>
<div class="a" style="left:671px;top:251.5px;width:129px;height:45px;line-height:15px;text-align:center;font-size:11px;font-weight:bold;color:#000;white-space:nowrap;letter-spacing:0.200px;">Weather** During<br>Application (temp &amp;<br>precipitation)</div>
<div class="a" style="left:801px;top:251.5px;width:89px;height:45px;line-height:15px;text-align:center;font-size:11px;font-weight:bold;color:#000;white-space:nowrap;letter-spacing:0.200px;">Application<br>(Inject, Incorp,<br>or Surface)</div>
<div class="a" style="left:554px;top:212px;width:118px;height:2px;background:#217346;"></div>
<div class="a" style="left:554px;top:212px;width:2px;height:88px;background:#217346;"></div>
<div class="a" style="left:670px;top:212px;width:2px;height:84px;background:#217346;"></div>
<div class="a" style="left:554px;top:297px;width:114px;height:3px;background:#217346;"></div>
<div class="a" style="left:667px;top:295px;width:6px;height:6px;background:#fff;"></div>
<div class="a" style="left:668px;top:296px;width:5px;height:5px;background:#217346;"></div>
<div class="a" style="left:1021.5px;top:300.8px;width:60.5px;height:16px;line-height:16px;font-size:12px;letter-spacing:0.400px;color:#000;white-space:nowrap;overflow:hidden;">saturated</div>
<div class="a" style="left:1021.5px;top:317.8px;width:60.5px;height:16px;line-height:16px;font-size:12px;letter-spacing:0.400px;color:#000;white-space:nowrap;overflow:hidden;">dry cracke</div>
<div class="a" style="left:1021.5px;top:334.8px;width:60.5px;height:16px;line-height:16px;font-size:12px;letter-spacing:0.400px;color:#000;white-space:nowrap;overflow:hidden;">non-sat</div>
<div class="a" style="left:1021.5px;top:351.8px;width:60.5px;height:16px;line-height:16px;font-size:12px;letter-spacing:0.400px;color:#000;white-space:nowrap;overflow:hidden;">frozen</div>
<div class="a" style="left:1021.5px;top:368.8px;width:60.5px;height:16px;line-height:16px;font-size:12px;letter-spacing:0.400px;color:#000;white-space:nowrap;overflow:hidden;">snow</div>
<div class="a" style="left:1085.5px;top:300.8px;width:60.5px;height:16px;line-height:16px;font-size:12px;letter-spacing:0.400px;color:#000;white-space:nowrap;overflow:hidden;">Inject</div>
<div class="a" style="left:1085.5px;top:317.8px;width:60.5px;height:16px;line-height:16px;font-size:12px;letter-spacing:0.400px;color:#000;white-space:nowrap;overflow:hidden;">Incorp</div>
<div class="a" style="left:1085.5px;top:334.8px;width:60.5px;height:16px;line-height:16px;font-size:12px;letter-spacing:0.400px;color:#000;white-space:nowrap;overflow:hidden;">Surface</div>
<div class="a" style="left:1510px;top:197px;width:14px;height:574px;background:#e6e6e6;"></div>
<div class="a" style="left:1513px;top:199px;width:14px;height:15px;background:#fff;border:1px solid #ababab;box-sizing:border-box;"></div>
<svg class="a" style="left:1516px;top:204px" width="8" height="5" viewBox="0 0 8 5"><path d="M0 5L4 0.500L8 5z" fill="#777"/></svg>
<div class="a" style="left:1513px;top:214px;width:14px;height:522px;background:#fff;border:1px solid #ababab;box-sizing:border-box;"></div>
<div class="a" style="left:1513px;top:736px;width:14px;height:21px;background:#dadada;"></div>
<div class="a" style="left:1513px;top:756px;width:14px;height:15px;background:#fff;border:1px solid #ababab;box-sizing:border-box;"></div>
<svg class="a" style="left:1516px;top:762px" width="8" height="5" viewBox="0 0 8 5"><path d="M0 0H8L4 4.500z" fill="#777"/></svg>
<div class="a" style="left:0px;top:770px;width:1510px;height:1px;background:#9b9b9b;"></div>
<div class="a" style="left:0px;top:771px;width:1524px;height:27px;background:#e6e6e6;"></div>
<div class="a" style="left:0px;top:798px;width:1524px;height:1px;background:#c6c6c6;"></div>
<svg class="a" style="left:25px;top:779px" width="6" height="9" viewBox="0 0 6 9"><path d="M5.500 0.500V8.500L0.500 4.500z" fill="#c6c6c6"/></svg>
<svg class="a" style="left:54px;top:779px" width="6" height="9" viewBox="0 0 6 9"><path d="M0.500 0.500V8.500L5.500 4.500z" fill="#c6c6c6"/></svg>
<div class="a" style="left:99px;top:770px;width:66px;height:25px;background:#fff;"></div>
<div class="a" style="left:99px;top:793px;width:66px;height:2px;background:#217346;"></div>
<div class="a" style="left:98px;top:770px;width:1px;height:24px;background:#ababab;"></div>
<div class="a" style="left:165px;top:770px;width:1px;height:24px;background:#ababab;"></div>
<div class="a" style="left:239px;top:774px;width:1px;height:20px;background:#ababab;"></div>
<svg class="a" style="left:273px;top:775px" width="17" height="17" viewBox="0 0 17 17"><circle cx="8.500" cy="8.500" r="7.300" fill="none" stroke="#666" stroke-width="1.100"/><path d="M8.500 4.500v8M4.500 8.500h8" stroke="#666" stroke-width="1.500"/></svg>
<div class="a" style="left:918px;top:779px;width:2px;height:2px;background:#ababab;"></div>
<div class="a" style="left:918px;top:783px;width:2px;height:2px;background:#ababab;"></div>
<div class="a" style="left:918px;top:787px;width:2px;height:2px;background:#ababab;"></div>
<div class="a" style="left:935px;top:777px;width:15px;height:15px;background:#fff;border:1px solid #ababab;box-sizing:border-box;"></div>
<svg class="a" style="left:940px;top:780px" width="5" height="9" viewBox="0 0 5 9"><path d="M4.500 0.500V8.500L0.500 4.500z" fill="#666"/></svg>
<div class="a" style="left:949px;top:777px;width:517px;height:15px;background:#fff;border:1px solid #ababab;box-sizing:border-box;"></div>
<div class="a" style="left:1466px;top:777px;width:29px;height:15px;background:#dadada;"></div>
<div class="a" style="left:1495px;top:777px;width:15px;height:15px;background:#fff;border:1px solid #ababab;box-sizing:border-box;"></div>
<svg class="a" style="left:1500.5px;top:780px" width="5" height="9" viewBox="0 0 5 9"><path d="M0.500 0.500V8.500L4.500 4.500z" fill="#666"/></svg>
<div class="a" style="left:0px;top:799px;width:1524px;height:20px;background:#f1f1f1;"></div>
<div class="a" style="left:0px;top:819px;width:1524px;height:1px;background:#faf6f8;"></div>
<div class="a" style="left:0px;top:820px;width:1524px;height:1px;background:#217346;"></div>
<div class="a" style="left:0px;top:821px;width:1524px;height:3px;background:linear-gradient(#7b7879,#8d8d8d);"></div>
<div class="a" style="left:1228px;top:799px;width:38px;height:20px;background:#c6c6c6;"></div>
<svg class="a" style="left:1240px;top:802px" width="14" height="14" viewBox="0 0 14 14"><path d="M0.500 0.500h12v12h-12zM4.500 0.500v12M8.500 0.500v12M0.500 4.500h12M0.500 8.500h12" fill="none" stroke="#666"/></svg>
<svg class="a" style="left:1278px;top:802px" width="15" height="14" viewBox="0 0 15 14"><rect x="0.500" y="0.500" width="13" height="12" fill="none" stroke="#666"/><rect x="3.500" y="2.500" width="7" height="8" fill="none" stroke="#666"/><path d="M5 4.500h4M5 6.500h4M5 8.500h4" stroke="#777"/></svg>
<svg class="a" style="left:1316px;top:802px" width="15" height="14" viewBox="0 0 15 14"><rect x="0.500" y="0.500" width="13" height="12" fill="none" stroke="#666"/><path d="M4.500 0.500v6M8.500 0.500v6M0.500 6.500h8" fill="none" stroke="#666"/></svg>
<div class="a" style="left:1347px;top:807px;width:6px;height:2px;background:#555;"></div>
<div class="a" style="left:1357px;top:808px;width:100px;height:1px;background:#9a9a9a;"></div>
<div class="a" style="left:1405px;top:803px;width:4px;height:11px;background:#555;"></div>
<div class="a" style="left:1461px;top:808px;width:8px;height:2px;background:#555;"></div>
<div class="a" style="left:1464px;top:805px;width:2px;height:8px;background:#555;"></div>
<span class="t" style="left:607.5px;top:11.84px;font-size:12px;line-height:12px;color:#ffffff;transform:scaleX(0.9743);">Template Daily Spreading Log</span>
<span class="t" style="left:770.6px;top:11.84px;font-size:12px;line-height:12px;color:#ffffff;transform:scaleX(1.0086);">[Compatibility Mode] - Excel</span>
<span class="t" style="left:19.2px;top:39.84px;font-size:12px;line-height:12px;color:#ffffff;transform:scaleX(0.9305);">File</span>
<span class="t" style="left:75.3px;top:39.84px;font-size:12px;line-height:12px;color:#217346;transform:scaleX(1.0245);">Home</span>
<span class="t" style="left:137.3px;top:39.84px;font-size:12px;line-height:12px;color:#ffffff;transform:scaleX(0.9528);">Insert</span>
<span class="t" style="left:195.5px;top:39.84px;font-size:12px;line-height:12px;color:#ffffff;transform:scaleX(0.9541);">Page Layout</span>
<span class="t" style="left:289.5px;top:39.84px;font-size:12px;line-height:12px;color:#ffffff;transform:scaleX(0.9617);">Formulas</span>
<span class="t" style="left:367.4px;top:39.84px;font-size:12px;line-height:12px;color:#ffffff;transform:scaleX(0.9227);">Data</span>
<span class="t" style="left:420.3px;top:39.84px;font-size:12px;line-height:12px;color:#ffffff;transform:scaleX(0.9299);">Review</span>
<span class="t" style="left:486.2px;top:39.84px;font-size:12px;line-height:12px;color:#ffffff;transform:scaleX(0.9536);">View</span>
<span class="t" style="left:557.6px;top:39.84px;font-size:12px;line-height:12px;color:#e6f0ea;transform:scaleX(1.0070);">Tell me what you want to do...</span>
<span class="t" style="left:1406px;top:39.84px;font-size:12px;line-height:12px;color:#ffffff;transform:scaleX(0.9699);">Sign in</span>
<span class="t" style="left:1478.3px;top:39.84px;font-size:12px;line-height:12px;color:#ffffff;transform:scaleX(0.8960);">Share</span>
<span class="t" style="left:10.6px;top:100.84px;font-size:12px;line-height:12px;color:#444444;transform:scaleX(0.8994);">Paste</span>
<span class="t" style="left:67.8px;top:66.84px;font-size:12px;line-height:12px;color:#444444;transform:scaleX(0.9739);">Cut</span>
<span class="t" style="left:67.8px;top:89.84px;font-size:12px;line-height:12px;color:#444444;transform:scaleX(0.9709);">Copy</span>
<span class="t" style="left:67.8px;top:112.84px;font-size:12px;line-height:12px;color:#444444;transform:scaleX(0.9766);">Format Painter</span>
<span class="t" style="left:44.3px;top:135.84px;font-size:12px;line-height:12px;color:#666666;transform:scaleX(0.9927);">Clipboard</span>
<span class="t" style="left:164.3px;top:74.84px;font-size:12px;line-height:12px;color:#444444;transform:scaleX(0.9869);">Arial</span>
<span class="t" style="left:275.2px;top:74.84px;font-size:12px;line-height:12px;color:#444444;transform:scaleX(0.9271);">8</span>
<span class="t" style="left:321.2px;top:74.70px;font-size:13px;line-height:13px;color:#444444;transform:scaleX(1.1532);">A</span>
<span class="t" style="left:344.3px;top:77.23px;font-size:10px;line-height:10px;color:#444444;transform:scaleX(1.1241);">A</span>
<span class="t" style="left:167.6px;top:104.54px;font-size:12px;line-height:12px;color:#444444;font-weight:bold;transform:scaleX(0.8764);">B</span>
<span class="t" style="left:190px;top:104.12px;font-size:12.5px;line-height:12.5px;color:#444444;font-weight:bold;font-style:italic;font-family:'Liberation Serif', serif;transform:scaleX(1.4359);">I</span>
<span class="t" style="left:211.3px;top:104.54px;font-size:12px;line-height:12px;color:#444444;font-weight:bold;transform:scaleX(0.9802);">U</span>
<span class="t" style="left:330.8px;top:103.40px;font-size:13px;line-height:13px;color:#444444;transform:scaleX(1.2339);">A</span>
<span class="t" style="left:240.6px;top:135.84px;font-size:12px;line-height:12px;color:#666666;transform:scaleX(0.9702);">Font</span>
<span class="t" style="left:518px;top:74.84px;font-size:12px;line-height:12px;color:#444444;transform:scaleX(0.9705);">Wrap Text</span>
<span class="t" style="left:518.5px;top:105.84px;font-size:12px;line-height:12px;color:#444444;transform:scaleX(0.9952);">Merge &amp; Center</span>
<span class="t" style="left:461px;top:135.84px;font-size:12px;line-height:12px;color:#666666;transform:scaleX(0.9930);">Alignment</span>
<span class="t" style="left:635.6px;top:74.84px;font-size:12px;line-height:12px;color:#444444;transform:scaleX(0.9720);">Text</span>
<span class="t" style="left:639.8px;top:102.11px;font-size:17px;line-height:17px;color:#444444;font-family:'Liberation Serif', serif;transform:scaleX(0.8941);">$</span>
<span class="t" style="left:671.3px;top:104.23px;font-size:14.5px;line-height:14.5px;color:#444444;transform:scaleX(0.9530);">%</span>
<span class="t" style="left:696px;top:98.01px;font-size:17px;line-height:17px;color:#444444;font-weight:bold;font-family:'Liberation Serif', serif;transform:scaleX(1.2706);">,</span>
<span class="t" style="left:669.6px;top:135.84px;font-size:12px;line-height:12px;color:#666666;transform:scaleX(0.9464);">Number</span>
<span class="t" style="left:777.6px;top:100.84px;font-size:12px;line-height:12px;color:#444444;transform:scaleX(1.0159);">Conditional</span>
<span class="t" style="left:774.6px;top:116.84px;font-size:12px;line-height:12px;color:#444444;transform:scaleX(1.0112);">Formatting</span>
<span class="t" style="left:846.5px;top:100.84px;font-size:12px;line-height:12px;color:#444444;transform:scaleX(0.9534);">Format as</span>
<span class="t" style="left:854.2px;top:116.84px;font-size:12px;line-height:12px;color:#444444;transform:scaleX(0.9691);">Table</span>
<span class="t" style="left:909.8px;top:74.84px;font-size:12px;line-height:12px;color:#000;transform:scaleX(1.0473);">Normal</span>
<span class="t" style="left:1016.3px;top:74.84px;font-size:12px;line-height:12px;color:#9c0006;transform:scaleX(1.0394);">Bad</span>
<span class="t" style="left:910px;top:102.84px;font-size:12px;line-height:12px;color:#006100;transform:scaleX(1.1070);">Good</span>
<span class="t" style="left:1016.3px;top:102.84px;font-size:12px;line-height:12px;color:#9c5700;transform:scaleX(1.1942);">Neutral</span>
<span class="t" style="left:938.5px;top:135.84px;font-size:12px;line-height:12px;color:#666666;transform:scaleX(0.8597);">Styles</span>
<span class="t" style="left:1149.5px;top:100.84px;font-size:12px;line-height:12px;color:#444444;transform:scaleX(0.9428);">Insert</span>
<span class="t" style="left:1189.6px;top:100.84px;font-size:12px;line-height:12px;color:#444444;transform:scaleX(0.9341);">Delete</span>
<span class="t" style="left:1229.6px;top:100.84px;font-size:12px;line-height:12px;color:#444444;transform:scaleX(0.9891);">Format</span>
<span class="t" style="left:1194.3px;top:135.84px;font-size:12px;line-height:12px;color:#666666;transform:scaleX(0.8661);">Cells</span>
<span class="t" style="left:1301.4px;top:66.64px;font-size:12px;line-height:12px;color:#444444;transform:scaleX(0.9887);">AutoSum</span>
<span class="t" style="left:1301.7px;top:89.64px;font-size:12px;line-height:12px;color:#444444;transform:scaleX(0.8807);">Fill</span>
<span class="t" style="left:1301.7px;top:113.04px;font-size:12px;line-height:12px;color:#444444;transform:scaleX(0.9168);">Clear</span>
<span class="t" style="left:1375.2px;top:100.54px;font-size:12px;line-height:12px;color:#444444;transform:scaleX(1.0042);">Sort &amp;</span>
<span class="t" style="left:1375.6px;top:117.04px;font-size:12px;line-height:12px;color:#444444;transform:scaleX(0.9373);">Filter</span>
<span class="t" style="left:1417.4px;top:100.54px;font-size:12px;line-height:12px;color:#444444;transform:scaleX(1.0090);">Find &amp;</span>
<span class="t" style="left:1415.5px;top:117.04px;font-size:12px;line-height:12px;color:#444444;transform:scaleX(0.9233);">Select</span>
<span class="t" style="left:1349.2px;top:135.84px;font-size:12px;line-height:12px;color:#666666;transform:scaleX(0.9945);">Editing</span>
<span class="t" style="left:11.2px;top:168.84px;font-size:12px;line-height:12px;color:#444444;">H1</span>
<span class="t" style="left:220.5px;top:166.15px;font-size:14px;line-height:14px;color:#555;font-style:italic;font-family:'Liberation Serif', serif;transform:scaleX(2.0562);">f</span>
<span class="t" style="left:226.5px;top:171.38px;font-size:9px;line-height:9px;color:#555;font-weight:bold;font-style:italic;font-family:'Liberation Serif', serif;transform:scaleX(1.4444);">x</span>
<span class="t" style="left:261px;top:167.50px;font-size:13px;line-height:13px;color:#444444;transform:scaleX(1.0699);">Soil Conditions* (saturated, dry cracked, non-sat., frozen, snow)</span>
<span class="t" style="left:111px;top:777.92px;font-size:12.5px;line-height:12.5px;color:#217346;font-weight:bold;transform:scaleX(0.9829);">Sheet1</span>
<span class="t" style="left:177.2px;top:777.92px;font-size:12.5px;line-height:12.5px;color:#444444;transform:scaleX(0.9889);">Example</span>
<span class="t" style="left:6.2px;top:803.69px;font-size:11px;line-height:11px;color:#444444;transform:scaleX(0.9624);">Ready</span>
<span class="t" style="left:1485.3px;top:803.19px;font-size:11px;line-height:11px;color:#444444;transform:scaleX(0.9381);">100%</span>
</body></html>
